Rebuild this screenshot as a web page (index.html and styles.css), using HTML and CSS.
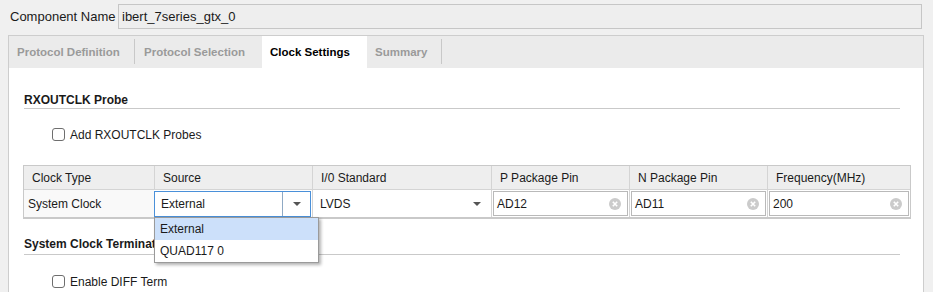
FILE: index.html
```html
<!DOCTYPE html>
<html lang="en">
  <head>
    <meta charset="UTF-8" />
    <title>IBERT 7 Series GTX - Clock Settings</title>
    <link rel="stylesheet" href="styles.css">
  </head>
  <body>
    <!-- Component name row -->
    <div class="name-row">
      <label class="name-label">Component Name</label>
      <div class="name-input">ibert_7series_gtx_0</div>
    </div>

    <!-- Tabbed panel -->
    <div class="panel">
      <div class="tabs">
        <div class="tab">Protocol Definition</div>
        <div class="tab">Protocol Selection</div>
        <div class="tab active">Clock Settings</div>
        <div class="tab">Summary</div>
      </div>

      <div class="content">
        <div class="section-title">RXOUTCLK Probe</div>
        <div class="check-row">
          <span class="checkbox"></span>
          <span>Add RXOUTCLK Probes</span>
        </div>

        <div class="clock-table">
          <div class="th">Clock Type</div>
          <div class="th">Source</div>
          <div class="th">I/0 Standard</div>
          <div class="th">P Package Pin</div>
          <div class="th">N Package Pin</div>
          <div class="th">Frequency(MHz)</div>

          <div class="td plain">System Clock</div>
          <div class="td source">
            <div class="combo focused">
              <span class="combo-value">External</span>
              <span class="combo-btn"><span class="arrow"></span></span>
            </div>
            <!-- Open dropdown list -->
            <div class="popup">
              <div class="popup-item selected">External</div>
              <div class="popup-item">QUAD117 0</div>
            </div>
          </div>
          <div class="td">
            <div class="combo flat">
              <span class="combo-value">LVDS</span>
              <span class="combo-btn"><span class="arrow"></span></span>
            </div>
          </div>
          <div class="td">
            <div class="text-input">
              <span>AD12</span>
              <svg class="clear" width="12" height="12" viewBox="0 0 12 12"><circle cx="6" cy="6" r="6" fill="#cbcbcb"/><path d="M3.8 3.8 L8.2 8.2 M8.2 3.8 L3.8 8.2" stroke="#fff" stroke-width="1.6"/></svg>
            </div>
          </div>
          <div class="td">
            <div class="text-input">
              <span>AD11</span>
              <svg class="clear" width="12" height="12" viewBox="0 0 12 12"><circle cx="6" cy="6" r="6" fill="#cbcbcb"/><path d="M3.8 3.8 L8.2 8.2 M8.2 3.8 L3.8 8.2" stroke="#fff" stroke-width="1.6"/></svg>
            </div>
          </div>
          <div class="td">
            <div class="text-input">
              <span>200</span>
              <svg class="clear" width="12" height="12" viewBox="0 0 12 12"><circle cx="6" cy="6" r="6" fill="#cbcbcb"/><path d="M3.8 3.8 L8.2 8.2 M8.2 3.8 L3.8 8.2" stroke="#fff" stroke-width="1.6"/></svg>
            </div>
          </div>
        </div>

        <div class="section-title second">System Clock Termination</div>
        <div class="check-row second">
          <span class="checkbox"></span>
          <span>Enable DIFF Term</span>
        </div>
      </div>
    </div>
  </body>
</html>
```

FILE: styles.css
```css
/* General */
body {
  margin: 0;
  background-color: #f0f0f0;
  font-family: "Liberation Sans", Arial, sans-serif;
  font-size: 12px;
  color: #1a1a1a;
  height: 292px;
  overflow: hidden;
}

/* Component name row */
.name-row {
  display: flex;
  align-items: center;
  padding: 4px 11px 0 10px;
}
.name-label {
  width: 108px;
  font-size: 13px;
}
.name-input {
  flex: 1;
  height: 23px;
  line-height: 23px;
  padding-left: 3px;
  border: 1px solid #c6c6c6;
  background-color: #eeeeee;
  font-size: 13px;
}

/* Tab panel */
.panel {
  margin: 6px 9px 0 8px;
  border: 1px solid #cdcdcd;
  border-bottom: none;
  background-color: #ebebeb;
}
.tabs {
  display: flex;
  height: 32px;
  background-color: #ebebeb;
}
.tab {
  position: relative;
  padding: 0 8px;
  line-height: 32px;
  font-size: 11.5px;
  font-weight: bold;
  color: #9a9a9a;
}
.tab:nth-child(1) {
  width: 111px;
}
.tab:nth-child(2) {
  width: 110px;
}
.tab:nth-child(4) {
  width: 60px;
}
.tab:not(.active)::after {
  content: "";
  position: absolute;
  right: 1px;
  top: 3px;
  bottom: 4px;
  width: 1px;
  background-color: #c8c8c8;
}
.tab.active {
  width: 89px;
  background-color: #fff;
  color: #000;
}
.tab:nth-child(2)::after {
  display: none;
}

/* Content */
.content {
  position: relative;
  box-sizing: border-box;
  background-color: #fff;
  height: 224px;
  padding: 24px 23px 0 15px;
}
.section-title {
  font-weight: bold;
  line-height: 16px;
  border-bottom: 1px solid #c9c9c9;
}
.section-title.second {
  margin-top: 17px;
  padding-bottom: 2px;
}
.check-row {
  display: flex;
  align-items: center;
  gap: 5px;
  margin: 19px 0 0 28px;
  height: 13px;
}
.check-row.second {
  margin-top: 20px;
}
.checkbox {
  width: 11px;
  height: 11px;
  border: 1px solid #6e6e6e;
  border-radius: 3px;
  background-color: #fff;
}

/* Clock table */
.clock-table {
  display: grid;
  grid-template-columns: 130px 158px 179px 138px 138px 1fr;
  grid-template-rows: 24px 27px;
  margin: 24px 0 0 -1px;
  width: 888px;
  border: 1px solid #c9c9c9;
  border-bottom-width: 2px;
  box-sizing: border-box;
}
.th {
  padding-left: 8px;
  line-height: 24px;
  background-color: #eeeeee;
  border-left: 1px solid #d4d4d4;
  border-bottom: 1px solid #d4d4d4;
}
.th:first-child {
  border-left: none;
}
.td {
  position: relative;
  display: flex;
  align-items: stretch;
  padding: 1px 1px 0 0;
  background-color: #fff;
  border-left: 1px solid #d4d4d4;
}
.td.plain {
  border-left: none;
  align-items: center;
  padding-left: 4px;
  background-color: #f9f9f9;
}
.td.source {
  border-left: none;
  padding-left: 0;
}

/* Combo boxes */
.combo {
  flex: 1;
  display: flex;
  align-items: center;
  background-color: #fff;
}
.combo.focused {
  border: 1px solid #4a90d9;
}
.combo.flat {
  margin-left: 1px;
}
.combo-value {
  flex: 1;
  padding-left: 6px;
}
.combo-btn {
  width: 27px;
  height: 100%;
  display: flex;
  align-items: center;
  justify-content: center;
}
.combo.focused .combo-btn {
  border-left: 1px solid #8fa9c4;
}
.arrow {
  width: 0;
  height: 0;
  border-left: 4px solid transparent;
  border-right: 4px solid transparent;
  border-top: 4px solid #555;
}

/* Text inputs with clear icon */
.text-input {
  flex: 1;
  display: flex;
  align-items: center;
  margin: 0 0 1px 1px;
  padding: 0 6px 0 3px;
  border: 1px solid #b9b9b9;
  background-color: #fff;
}
.text-input span {
  flex: 1;
}

/* Dropdown popup */
.popup {
  position: absolute;
  left: 0;
  top: 27px;
  width: 163px;
  background-color: #fff;
  border: 1px solid #9a9a9a;
  box-shadow: 2px 2px 3px rgba(0, 0, 0, 0.3);
  z-index: 2;
}
.popup-item {
  height: 22px;
  line-height: 22px;
  padding-left: 5px;
}
.popup-item.selected {
  background-color: #cce0fa;
}
```
